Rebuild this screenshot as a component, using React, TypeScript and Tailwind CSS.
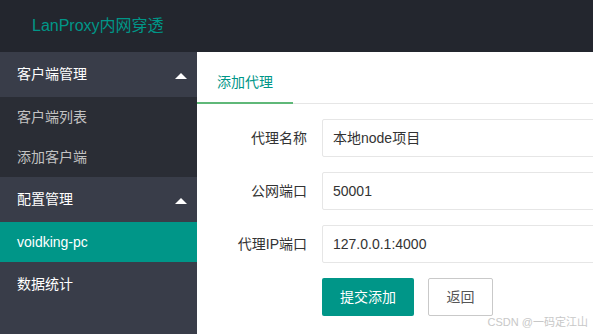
import React from 'react';

const font = 'font-["Liberation_Sans","Noto_Sans_CJK_SC",sans-serif]';

function Arrow() {
    return <span className="mt-[3px] h-0 w-0 border-x-[6px] border-b-[6px] border-x-transparent border-b-white" />;
}

function Group({ title }: { title: string }) {
    return (
        <div className="flex h-[45px] items-center justify-between pl-[17px] pr-[10px] text-[14px] text-white">
            <span>{title}</span>
            <Arrow />
        </div>
    );
}

function Row({ label, value }: { label: string; value: string }) {
    return (
        <div className="mb-[15px] flex">
            <label className="w-[110px] shrink-0 pr-[15px] text-right text-[14px] leading-[38px] text-[#333]">{label}</label>
            <div className="h-[38px] w-[400px] shrink-0 rounded-[2px] border border-[#e6e6e6] bg-white pl-[10px] text-[14px] leading-[36px] text-[#333]">
                {value}
            </div>
        </div>
    );
}

export default function App() {
    return (
        <div className={`relative flex h-[334px] w-[593px] flex-col overflow-hidden ${font}`}>
            {/* Header */}
            <header className="flex h-[52px] shrink-0 items-center bg-[#23262e] pl-8 text-[16px] text-[#009688]">
                LanProxy内网穿透
            </header>

            <div className="flex flex-1">
                {/* Sidebar */}
                <aside className="w-[197px] shrink-0 bg-[#393d49]">
                    <Group title="客户端管理" />
                    <div className="bg-[#2a2d35] text-[14px] text-[#c2c2c2]">
                        <div className="flex h-[40px] items-center pl-[17px]">客户端列表</div>
                        <div className="flex h-[40px] items-center pl-[17px]">添加客户端</div>
                    </div>
                    <Group title="配置管理" />
                    <div className="flex h-[40px] items-center bg-[#009688] pl-[17px] text-[14px] text-white">voidking-pc</div>
                    <div className="flex h-[45px] items-center pl-[17px] text-[14px] text-white">数据统计</div>
                </aside>

                {/* Content */}
                <main className="flex-1 overflow-hidden bg-white">
                    <div className="mt-[11px] flex h-[41px] border-b border-[#e6e6e6]">
                        <div className="-mb-px flex h-[41px] items-center border-b-2 border-[#5fb878] px-5 text-[14px] text-[#009688]">
                            添加代理
                        </div>
                    </div>

                    <form className="pl-[15px] pt-[15px]">
                        <Row label="代理名称" value="本地node项目" />
                        <Row label="公网端口" value="50001" />
                        <Row label="代理IP端口" value="127.0.0.1:4000" />
                        <div className="ml-[110px] flex gap-[14px]">
                            <button type="button" className="h-[38px] w-[92px] rounded-[2px] bg-[#009688] text-[14px] text-white">
                                提交添加
                            </button>
                            <button type="button" className="h-[38px] w-[65px] rounded-[2px] border border-[#c9c9c9] bg-white text-[14px] text-[#555]">
                                返回
                            </button>
                        </div>
                    </form>
                </main>
            </div>

            {/* Watermark */}
            <div className="absolute bottom-[5px] right-[5px] text-[11px] leading-[14px] text-[#c8c8c8]">CSDN @一码定江山</div>
        </div>
    );
}
